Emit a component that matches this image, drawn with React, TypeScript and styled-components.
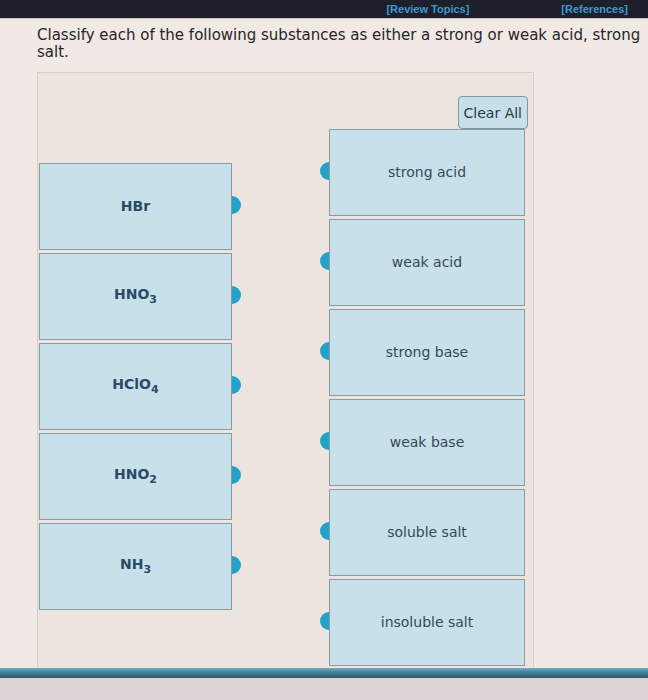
import React from 'react';
import styled, { createGlobalStyle } from 'styled-components';

const GlobalStyle = createGlobalStyle`
  html, body {
    margin: 0;
    padding: 0;
    background: #f1e9e5;
  }
  body {
    font-family: Verdana, "DejaVu Sans", sans-serif;
  }
`;

const Page = styled.div`
  width: 648px;
  height: 700px;
  overflow: hidden;
  display: flex;
  flex-direction: column;
  background: #f1e9e5;
`;

const TopBar = styled.div`
  height: 18px;
  background: #1d1f2b;
  display: flex;
  align-items: center;
  justify-content: flex-end;
  gap: 92px;
  padding-right: 20px;
  border-bottom: 1px solid #c9c3c0;
`;

const TopLink = styled.span`
  font-family: "Liberation Sans", Arial, sans-serif;
  font-size: 11px;
  font-weight: bold;
  color: #3d9ccb;
`;

const Question = styled.p`
  margin: 8px 0 0;
  padding: 0 4px 0 37px;
  font-size: 15px;
  line-height: 17px;
  color: #262626;
`;

const Panel = styled.div`
  margin: 11px 0 0 37px;
  width: 497px;
  background: #ece5df;
  border: 1px solid #d6d0cb;
  border-bottom: none;
  padding: 23px 0 2px 1px;
  box-sizing: border-box;
  display: flex;
  flex-direction: column;
`;

const Toolbar = styled.div`
  display: flex;
  justify-content: flex-end;
  padding-right: 5px;
`;

const ClearButton = styled.button`
  height: 33px;
  padding: 0 5px;
  font-family: Verdana, "DejaVu Sans", sans-serif;
  font-size: 14px;
  color: #2c3a44;
  background: #c6dfe8;
  border: 1px solid #7d98a4;
  border-radius: 4px;
`;

const Columns = styled.div`
  display: grid;
  grid-template-columns: 193px 196px;
  justify-content: space-between;
  padding-right: 8px;
`;

const Column = styled.div<{ $offset: number }>`
  display: flex;
  flex-direction: column;
  gap: 3px;
  padding-top: ${p => p.$offset}px;
`;

const Card = styled.div<{ $dot: 'left' | 'right' }>`
  position: relative;
  height: 87px;
  box-sizing: border-box;
  background: #c7e0ea;
  border: 1px solid #8a9ba2;
  display: flex;
  align-items: center;
  justify-content: center;
  padding-bottom: 2px;

  &::after {
    content: '';
    position: absolute;
    top: 50%;
    width: 9px;
    height: 18px;
    margin-top: -11px;
    background: #22a1c9;
    ${p =>
      p.$dot === 'right'
        ? 'right: -10px; border-radius: 0 9px 9px 0;'
        : 'left: -10px; border-radius: 9px 0 0 9px;'}
  }
`;

const Formula = styled.span`
  font-size: 14px;
  font-weight: bold;
  color: #2b4a68;

  sub {
    font-size: 11px;
    vertical-align: -4px;
  }
`;

const Label = styled.span`
  font-size: 14px;
  color: #34495a;
`;

const BottomBar = styled.div`
  height: 10px;
  background: linear-gradient(#6fb0c6 0%, #4b86a0 35%, #34566c 100%);
`;

const Footer = styled.div`
  flex: 1;
  background: #ddd6d4;
`;

const substances: [string, string?][] = [
  ['HBr'],
  ['HNO', '3'],
  ['HClO', '4'],
  ['HNO', '2'],
  ['NH', '3'],
];

const categories = [
  'strong acid',
  'weak acid',
  'strong base',
  'weak base',
  'soluble salt',
  'insoluble salt',
];

const App: React.FC = () => {
  return (
    <Page>
      <GlobalStyle />
      <TopBar>
        <TopLink>[Review Topics]</TopLink>
        <TopLink>[References]</TopLink>
      </TopBar>
      <Question>
        Classify each of the following substances as either a strong or weak acid, strong
        <br />
        salt.
      </Question>
      <Panel>
        <Toolbar>
          <ClearButton>Clear All</ClearButton>
        </Toolbar>
        <Columns>
          <Column $offset={34}>
            {substances.map(([base, sub]) => (
              <Card key={base + (sub || '')} $dot="right">
                <Formula>
                  {base}
                  {sub && <sub>{sub}</sub>}
                </Formula>
              </Card>
            ))}
          </Column>
          <Column $offset={0}>
            {categories.map(c => (
              <Card key={c} $dot="left">
                <Label>{c}</Label>
              </Card>
            ))}
          </Column>
        </Columns>
      </Panel>
      <BottomBar />
      <Footer />
    </Page>
  );
};

export default App;
